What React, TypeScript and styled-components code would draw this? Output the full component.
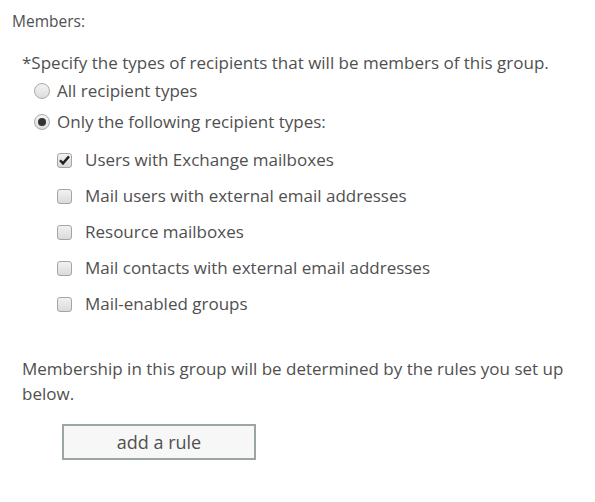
import styled, { createGlobalStyle } from 'styled-components';

const GlobalStyle = createGlobalStyle`
  body {
    margin: 0;
    background: #ffffff;
    font-family: "Segoe UI", "Open Sans", "Noto Sans", sans-serif;
    color: #505050;
  }
`;

const recipientTypes = [
  { label: 'Users with Exchange mailboxes', checked: true },
  { label: 'Mail users with external email addresses', checked: false },
  { label: 'Resource mailboxes', checked: false },
  { label: 'Mail contacts with external email addresses', checked: false },
  { label: 'Mail-enabled groups', checked: false },
];

function App() {
  return (
    <>
      <GlobalStyle />
      <Page>
        <Title>Members:</Title>
        <Section>
          <Description>*Specify the types of recipients that will be members of this group.</Description>
          <RadioGroup>
            <OptionRow>
              <Radio selected={false} />
              <OptionText>All recipient types</OptionText>
            </OptionRow>
            <OptionRow>
              <Radio selected={true} />
              <OptionText>Only the following recipient types:</OptionText>
            </OptionRow>
          </RadioGroup>
          <CheckList>
            {recipientTypes.map((item) => (
              <CheckRow key={item.label}>
                <CheckBox>
                  {item.checked ? (
                    <svg width="11" height="10" viewBox="0 0 11 10">
                      <path d="M1 5.2 L4 8.4 L10 1.4" fill="none" stroke="#222" strokeWidth="2.4" />
                    </svg>
                  ) : null}
                </CheckBox>
                <OptionText>{item.label}</OptionText>
              </CheckRow>
            ))}
          </CheckList>
          <Note>Membership in this group will be determined by the rules you set up below.</Note>
          <RuleButton>add a rule</RuleButton>
        </Section>
      </Page>
    </>
  );
}
export default App;

const Page = styled.div`
  padding: 8px 0 0 12px;
  width: 595px;
  height: 502px;
  box-sizing: border-box;
`;

const Title = styled.div`
  font-size: 15.5px;
  line-height: 26px;
`;

const Section = styled.div`
  padding-left: 10px;
  margin-top: 16px;
  width: 553px;
`;

const Description = styled.div`
  font-size: 17px;
  line-height: 26px;
`;

const RadioGroup = styled.div`
  display: flex;
  flex-direction: column;
  gap: 5px;
  padding-left: 12px;
  margin-top: 2px;
`;

const OptionRow = styled.div`
  display: flex;
  align-items: center;
  gap: 7px;
  height: 26px;
`;

const OptionText = styled.span`
  font-size: 17px;
  line-height: 26px;
`;

const Radio = styled.span<{ selected: boolean }>`
  width: 16px;
  height: 16px;
  border-radius: 50%;
  border: 1px solid #a9a9a9;
  background: linear-gradient(#f4f4f4, #dcdcdc);
  box-sizing: border-box;
  display: flex;
  align-items: center;
  justify-content: center;
  &::after {
    content: '';
    display: ${(p) => (p.selected ? 'block' : 'none')};
    width: 8px;
    height: 8px;
    border-radius: 50%;
    background: #333;
  }
`;

const CheckList = styled.div`
  display: flex;
  flex-direction: column;
  gap: 10px;
  padding-left: 35px;
  margin-top: 12px;
`;

const CheckRow = styled.div`
  display: flex;
  align-items: center;
  gap: 13px;
  height: 26px;
`;

const CheckBox = styled.span`
  width: 15px;
  height: 15px;
  border-radius: 3px;
  border: 1px solid #a5a5a5;
  background: linear-gradient(#f2f2f2, #dadada);
  box-sizing: border-box;
  display: flex;
  align-items: center;
  justify-content: center;
`;

const Note = styled.div`
  font-size: 17px;
  line-height: 25px;
  margin-top: 39px;
`;

const RuleButton = styled.button`
  display: block;
  margin: 18px 0 0 40px;
  width: 194px;
  height: 36px;
  border: 2px solid #9ba5a5;
  background: #f7f7f7;
  color: #505050;
  font-family: "Segoe UI", "Open Sans", "Noto Sans", sans-serif;
  font-size: 18px;
  padding: 0;
`;
